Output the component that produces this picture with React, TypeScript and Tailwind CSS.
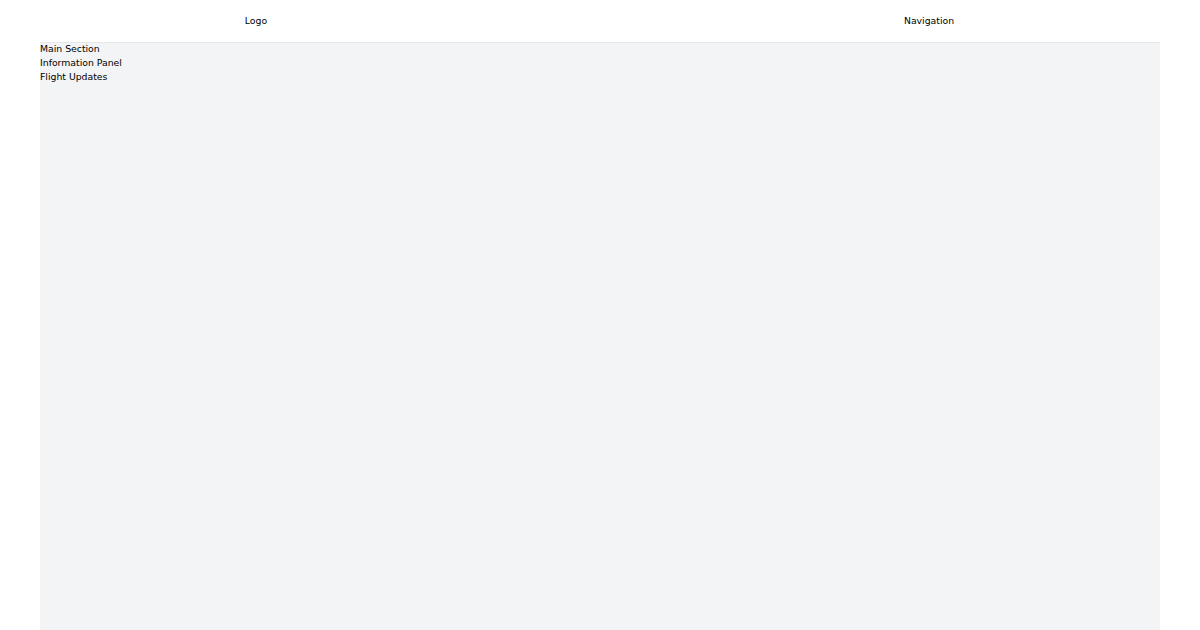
export default function App() {
  return (
    <div className="min-h-screen bg-white px-10 text-[9.3px] leading-[14px] text-black" style={{ fontFamily: '"DejaVu Sans", sans-serif' }}>
      <header className="flex h-[43px] items-center border-b border-gray-200">
        <div className="w-[432px] text-center">Logo</div>
        <div className="ml-auto w-[462px] text-center">Navigation</div>
      </header>
      <main className="flex min-h-[587px] flex-col gap-[2px] bg-gray-100 leading-[12px]">
        <section>Main Section</section>
        <aside>Information Panel</aside>
        <div>Flight Updates</div>
      </main>
    </div>
  );
}
